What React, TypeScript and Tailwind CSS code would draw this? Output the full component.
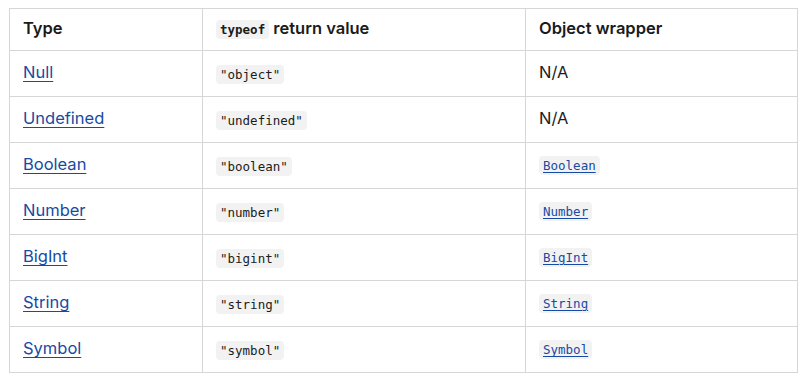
import React from "react";

const rows = [
  { type: "Null", ret: '"object"', wrapper: null },
  { type: "Undefined", ret: '"undefined"', wrapper: null },
  { type: "Boolean", ret: '"boolean"', wrapper: "Boolean" },
  { type: "Number", ret: '"number"', wrapper: "Number" },
  { type: "BigInt", ret: '"bigint"', wrapper: "BigInt" },
  { type: "String", ret: '"string"', wrapper: "String" },
  { type: "Symbol", ret: '"symbol"', wrapper: "Symbol" },
];

const mono = "font-['DejaVu_Sans_Mono','Liberation_Mono',monospace]";

function Code({ children }: { children: React.ReactNode }) {
  return (
    <code className={`${mono} text-[12.5px] bg-[#f2f2f2] rounded-[4px] px-[4px] py-[2px]`}>
      {children}
    </code>
  );
}

export default function App() {
  return (
    <div className="w-[800px] h-[379px] bg-white pl-[9px] pt-[8px] font-['Inter','Noto_Sans',sans-serif] text-[#1b1b1b]">
      <table className="border-collapse border border-[#d6d6d6] w-[788px] table-fixed">
        <colgroup>
          <col className="w-[193px]" />
          <col className="w-[323px]" />
          <col className="w-[272px]" />
        </colgroup>
        <thead>
          <tr className="h-[42px]">
            <th className="border border-[#d6d6d6] text-left font-semibold text-[16.5px] px-[13px] pb-[2px]">Type</th>
            <th className="border border-[#d6d6d6] text-left font-semibold text-[16.5px] px-[13px] pb-[2px]">
              <Code>typeof</Code> return value
            </th>
            <th className="border border-[#d6d6d6] text-left font-semibold text-[16.5px] px-[13px] pb-[2px]">Object wrapper</th>
          </tr>
        </thead>
        <tbody>
          {rows.map((r) => (
            <tr key={r.type} className="h-[46px]">
              <td className="border border-[#d6d6d6] px-[13px] pb-[2px] text-[16.5px]">
                <a href="#" className="text-[#164ba3] underline underline-offset-[3px]">{r.type}</a>
              </td>
              <td className="border border-[#d6d6d6] px-[13px] pb-[2px] text-[16px]">
                <Code>{r.ret}</Code>
              </td>
              <td className="border border-[#d6d6d6] px-[13px] pb-[2px] text-[16.5px]">
                {r.wrapper ? (
                  <Code>
                    <a href="#" className="text-[#164ba3] underline underline-offset-[2px]">{r.wrapper}</a>
                  </Code>
                ) : (
                  "N/A"
                )}
              </td>
            </tr>
          ))}
        </tbody>
      </table>
    </div>
  );
}
